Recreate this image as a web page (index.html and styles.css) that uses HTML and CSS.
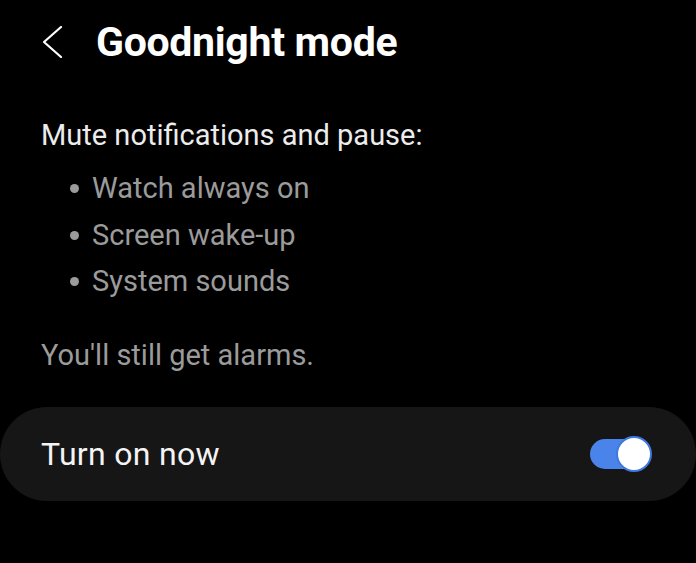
FILE: index.html
```html
<!DOCTYPE html>
<html lang="en">
<head>
    <meta charset="UTF-8">
    <meta name="viewport" content="width=device-width, initial-scale=1.0">
    <title>Goodnight mode</title>
    <link rel="stylesheet" href="styles.css">
</head>
<body>
    <!-- Header -->
    <div class="header">
        <div class="back-btn">
            <svg width="22" height="32" viewBox="0 0 22 32">
                <path d="M19 1 L2 16 L19 31" fill="none" stroke="#fff" stroke-width="2.2" stroke-linecap="round" stroke-linejoin="round"/>
            </svg>
        </div>
        <div class="header-title">Goodnight mode</div>
    </div>

    <!-- Description -->
    <div class="content">
        <div class="intro">Mute notifications and pause:</div>
        <ul class="pause-list">
            <li>Watch always on</li>
            <li>Screen wake-up</li>
            <li>System sounds</li>
        </ul>
        <div class="note">You'll still get alarms.</div>
    </div>

    <!-- Switch row -->
    <div class="switch-card">
        <div class="switch-label">Turn on now</div>
        <div class="toggle on">
            <div class="toggle-thumb"></div>
        </div>
    </div>
</body>
</html>
```

FILE: styles.css
```css
* { margin: 0; padding: 0; box-sizing: border-box; }
body { font-family: Roboto, 'Noto Sans', sans-serif; background: #000; color: #f2f2f2; width: 696px; height: 563px; overflow: hidden; }

.header { display: flex; align-items: center; height: 84px; padding-left: 42px; }
.back-btn { width: 22px; height: 32px; margin-right: 32px; }
.back-btn svg { display: block; }
.header-title { font-size: 41px; font-weight: bold; color: #fff; letter-spacing: -0.3px; }

.content { padding: 0 41px; }
.intro { font-size: 29px; line-height: 46px; margin-top: 28px; color: #ececec; }
.pause-list { list-style: none; margin-top: 7px; }
.pause-list li { font-size: 29px; line-height: 46.5px; color: #9b9b9b; padding-left: 51px; position: relative; }
.pause-list li::before { content: ""; position: absolute; left: 29px; top: 19px; width: 9px; height: 9px; border-radius: 50%; background: #9b9b9b; }
.note { font-size: 29px; line-height: 46px; color: #9b9b9b; margin-top: 27px; }

.switch-card { display: flex; align-items: center; justify-content: space-between; height: 94px; margin-top: 29px; background: #161616; border-radius: 47px; padding: 0 44px 0 41px; }
.switch-label { font-size: 32px; color: #f4f4f4; letter-spacing: 0.3px; }

.toggle { position: relative; width: 62px; height: 36px; display: flex; align-items: center; }
.toggle.on::before { content: ""; position: absolute; left: 0; top: 3px; width: 52px; height: 30px; border-radius: 15px; background: #4a84ea; }
.toggle-thumb { position: absolute; right: 0; top: 0; width: 36px; height: 36px; border-radius: 50%; background: #fff; border: 2px solid #3f78e0; }
```
